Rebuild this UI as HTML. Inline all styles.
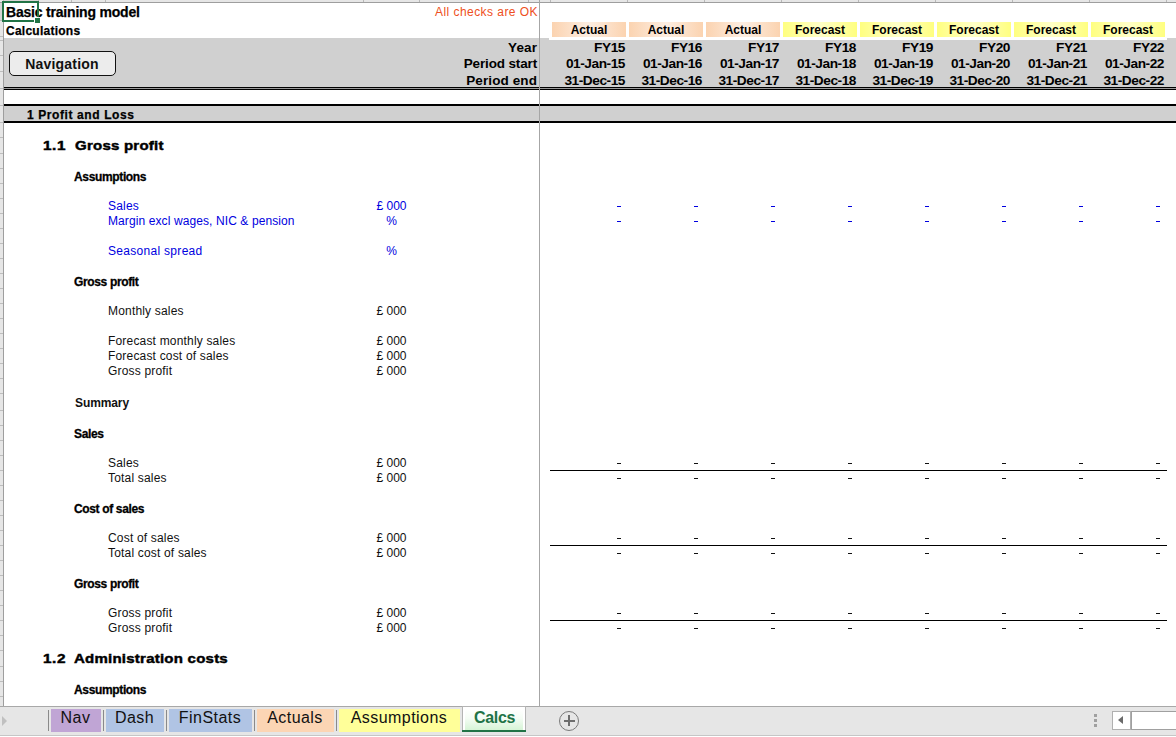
<!DOCTYPE html>
<html><head><meta charset="utf-8"><style>
html,body{margin:0;padding:0;}
body{width:1176px;height:737px;overflow:hidden;position:relative;background:#fff;font-family:"Liberation Sans", sans-serif;}
.t{position:absolute;white-space:nowrap;line-height:20px;font-family:"Liberation Sans", sans-serif;}
.r{position:absolute;}
</style></head><body>
<div class="r" style="left:0px;top:0px;width:3px;height:706px;background:#e6e6e6;"></div>
<div class="r" style="left:0px;top:3px;width:3px;height:17px;background:#d4d4d4;"></div>
<div class="r" style="left:3px;top:0px;width:1px;height:706px;background:#9e9e9e;"></div>
<div class="r" style="left:0px;top:0px;width:1176px;height:2px;background:#e6e6e6;"></div>
<div class="r" style="left:4px;top:0px;width:34px;height:2px;background:#d8d4d4;"></div>
<div class="r" style="left:0px;top:2px;width:1176px;height:1px;background:#9e9e9e;"></div>
<div class="r" style="left:3px;top:0px;width:1px;height:2px;background:#b8b8b8;"></div>
<div class="r" style="left:38px;top:0px;width:1px;height:2px;background:#b8b8b8;"></div>
<div class="r" style="left:71px;top:0px;width:1px;height:2px;background:#b8b8b8;"></div>
<div class="r" style="left:105px;top:0px;width:1px;height:2px;background:#b8b8b8;"></div>
<div class="r" style="left:363px;top:0px;width:1px;height:2px;background:#b8b8b8;"></div>
<div class="r" style="left:419px;top:0px;width:1px;height:2px;background:#b8b8b8;"></div>
<div class="r" style="left:528px;top:0px;width:1px;height:2px;background:#b8b8b8;"></div>
<div class="r" style="left:550px;top:0px;width:1px;height:2px;background:#b8b8b8;"></div>
<div class="r" style="left:627px;top:0px;width:1px;height:2px;background:#b8b8b8;"></div>
<div class="r" style="left:704px;top:0px;width:1px;height:2px;background:#b8b8b8;"></div>
<div class="r" style="left:781px;top:0px;width:1px;height:2px;background:#b8b8b8;"></div>
<div class="r" style="left:858px;top:0px;width:1px;height:2px;background:#b8b8b8;"></div>
<div class="r" style="left:935px;top:0px;width:1px;height:2px;background:#b8b8b8;"></div>
<div class="r" style="left:1012px;top:0px;width:1px;height:2px;background:#b8b8b8;"></div>
<div class="r" style="left:1089px;top:0px;width:1px;height:2px;background:#b8b8b8;"></div>
<div class="r" style="left:1166px;top:0px;width:1px;height:2px;background:#b8b8b8;"></div>
<div class="r" style="left:0px;top:20px;width:3px;height:1px;background:#bdbdbd;"></div>
<div class="r" style="left:0px;top:36px;width:3px;height:1px;background:#bdbdbd;"></div>
<div class="r" style="left:0px;top:40px;width:3px;height:1px;background:#bdbdbd;"></div>
<div class="r" style="left:0px;top:55px;width:3px;height:1px;background:#bdbdbd;"></div>
<div class="r" style="left:0px;top:71px;width:3px;height:1px;background:#bdbdbd;"></div>
<div class="r" style="left:0px;top:88px;width:3px;height:1px;background:#bdbdbd;"></div>
<div class="r" style="left:0px;top:105px;width:3px;height:1px;background:#bdbdbd;"></div>
<div class="r" style="left:0px;top:122px;width:3px;height:1px;background:#bdbdbd;"></div>
<div class="r" style="left:0px;top:137px;width:3px;height:1px;background:#bdbdbd;"></div>
<div class="r" style="left:0px;top:153px;width:3px;height:1px;background:#bdbdbd;"></div>
<div class="r" style="left:0px;top:168px;width:3px;height:1px;background:#bdbdbd;"></div>
<div class="r" style="left:0px;top:183px;width:3px;height:1px;background:#bdbdbd;"></div>
<div class="r" style="left:0px;top:198px;width:3px;height:1px;background:#bdbdbd;"></div>
<div class="r" style="left:0px;top:213px;width:3px;height:1px;background:#bdbdbd;"></div>
<div class="r" style="left:0px;top:228px;width:3px;height:1px;background:#bdbdbd;"></div>
<div class="r" style="left:0px;top:243px;width:3px;height:1px;background:#bdbdbd;"></div>
<div class="r" style="left:0px;top:258px;width:3px;height:1px;background:#bdbdbd;"></div>
<div class="r" style="left:0px;top:273px;width:3px;height:1px;background:#bdbdbd;"></div>
<div class="r" style="left:0px;top:288px;width:3px;height:1px;background:#bdbdbd;"></div>
<div class="r" style="left:0px;top:303px;width:3px;height:1px;background:#bdbdbd;"></div>
<div class="r" style="left:0px;top:318px;width:3px;height:1px;background:#bdbdbd;"></div>
<div class="r" style="left:0px;top:333px;width:3px;height:1px;background:#bdbdbd;"></div>
<div class="r" style="left:0px;top:348px;width:3px;height:1px;background:#bdbdbd;"></div>
<div class="r" style="left:0px;top:363px;width:3px;height:1px;background:#bdbdbd;"></div>
<div class="r" style="left:0px;top:378px;width:3px;height:1px;background:#bdbdbd;"></div>
<div class="r" style="left:0px;top:393px;width:3px;height:1px;background:#bdbdbd;"></div>
<div class="r" style="left:0px;top:410px;width:3px;height:1px;background:#bdbdbd;"></div>
<div class="r" style="left:0px;top:425px;width:3px;height:1px;background:#bdbdbd;"></div>
<div class="r" style="left:0px;top:440px;width:3px;height:1px;background:#bdbdbd;"></div>
<div class="r" style="left:0px;top:455px;width:3px;height:1px;background:#bdbdbd;"></div>
<div class="r" style="left:0px;top:470px;width:3px;height:1px;background:#bdbdbd;"></div>
<div class="r" style="left:0px;top:485px;width:3px;height:1px;background:#bdbdbd;"></div>
<div class="r" style="left:0px;top:500px;width:3px;height:1px;background:#bdbdbd;"></div>
<div class="r" style="left:0px;top:515px;width:3px;height:1px;background:#bdbdbd;"></div>
<div class="r" style="left:0px;top:530px;width:3px;height:1px;background:#bdbdbd;"></div>
<div class="r" style="left:0px;top:545px;width:3px;height:1px;background:#bdbdbd;"></div>
<div class="r" style="left:0px;top:560px;width:3px;height:1px;background:#bdbdbd;"></div>
<div class="r" style="left:0px;top:575px;width:3px;height:1px;background:#bdbdbd;"></div>
<div class="r" style="left:0px;top:590px;width:3px;height:1px;background:#bdbdbd;"></div>
<div class="r" style="left:0px;top:605px;width:3px;height:1px;background:#bdbdbd;"></div>
<div class="r" style="left:0px;top:620px;width:3px;height:1px;background:#bdbdbd;"></div>
<div class="r" style="left:0px;top:635px;width:3px;height:1px;background:#bdbdbd;"></div>
<div class="r" style="left:0px;top:650px;width:3px;height:1px;background:#bdbdbd;"></div>
<div class="r" style="left:0px;top:666px;width:3px;height:1px;background:#bdbdbd;"></div>
<div class="r" style="left:0px;top:681px;width:3px;height:1px;background:#bdbdbd;"></div>
<div class="r" style="left:0px;top:696px;width:3px;height:1px;background:#bdbdbd;"></div>
<div class="r" style="left:4px;top:38px;width:1172px;height:49px;background:#d0d0d0;"></div>
<div class="r" style="left:549px;top:37px;width:618px;height:3px;background:#fff;"></div>
<div class="r" style="left:4px;top:87px;width:1172px;height:1px;background:#000;"></div>
<div class="r" style="left:4px;top:88px;width:1172px;height:1px;background:#9a9a9a;"></div>
<div class="r" style="left:4px;top:89px;width:1172px;height:1px;background:#000;"></div>
<div class="r" style="left:4px;top:104px;width:1172px;height:2px;background:#000;"></div>
<div class="r" style="left:4px;top:106px;width:1172px;height:15px;background:#d0d0d0;"></div>
<div class="r" style="left:4px;top:121px;width:1172px;height:2px;background:#000;"></div>
<div class="r" style="left:552px;top:22px;width:74px;height:15px;background:linear-gradient(90deg,#fbd3b0 0%,#fdeee2 50%,#fbd3b0 100%);"></div>
<div class="t" style="left:439.0px;width:300px;text-align:center;top:20.24px;font-size:12px;font-weight:bold;color:#000;letter-spacing:0px;">Actual</div>
<div class="r" style="left:629px;top:22px;width:74px;height:15px;background:linear-gradient(90deg,#fbd3b0 0%,#fdeee2 50%,#fbd3b0 100%);"></div>
<div class="t" style="left:516.0px;width:300px;text-align:center;top:20.24px;font-size:12px;font-weight:bold;color:#000;letter-spacing:0px;">Actual</div>
<div class="r" style="left:706px;top:22px;width:74px;height:15px;background:linear-gradient(90deg,#fbd3b0 0%,#fdeee2 50%,#fbd3b0 100%);"></div>
<div class="t" style="left:593.0px;width:300px;text-align:center;top:20.24px;font-size:12px;font-weight:bold;color:#000;letter-spacing:0px;">Actual</div>
<div class="r" style="left:783px;top:22px;width:74px;height:15px;background:linear-gradient(90deg,#ffff80 0%,#ffffc8 50%,#ffff80 100%);"></div>
<div class="t" style="left:670.0px;width:300px;text-align:center;top:20.24px;font-size:12px;font-weight:bold;color:#000;letter-spacing:0px;">Forecast</div>
<div class="r" style="left:860px;top:22px;width:74px;height:15px;background:linear-gradient(90deg,#ffff80 0%,#ffffc8 50%,#ffff80 100%);"></div>
<div class="t" style="left:747.0px;width:300px;text-align:center;top:20.24px;font-size:12px;font-weight:bold;color:#000;letter-spacing:0px;">Forecast</div>
<div class="r" style="left:937px;top:22px;width:74px;height:15px;background:linear-gradient(90deg,#ffff80 0%,#ffffc8 50%,#ffff80 100%);"></div>
<div class="t" style="left:824.0px;width:300px;text-align:center;top:20.24px;font-size:12px;font-weight:bold;color:#000;letter-spacing:0px;">Forecast</div>
<div class="r" style="left:1014px;top:22px;width:74px;height:15px;background:linear-gradient(90deg,#ffff80 0%,#ffffc8 50%,#ffff80 100%);"></div>
<div class="t" style="left:901.0px;width:300px;text-align:center;top:20.24px;font-size:12px;font-weight:bold;color:#000;letter-spacing:0px;">Forecast</div>
<div class="r" style="left:1091px;top:22px;width:74px;height:15px;background:linear-gradient(90deg,#ffff80 0%,#ffffc8 50%,#ffff80 100%);"></div>
<div class="t" style="left:978.0px;width:300px;text-align:center;top:20.24px;font-size:12px;font-weight:bold;color:#000;letter-spacing:0px;">Forecast</div>
<div class="t" style="right:639px;top:38.32px;font-size:13.5px;font-weight:bold;color:#000;letter-spacing:0.1px;">Year</div>
<div class="t" style="right:639px;top:54.32px;font-size:13.5px;font-weight:bold;color:#000;letter-spacing:-0.15px;">Period start</div>
<div class="t" style="right:639px;top:71.32px;font-size:13.5px;font-weight:bold;color:#000;letter-spacing:0.1px;">Period end</div>
<div class="t" style="right:551px;top:38.25px;font-size:13.7px;font-weight:bold;color:#000;letter-spacing:-0.45px;">FY15</div>
<div class="t" style="right:551px;top:54.25px;font-size:13.7px;font-weight:bold;color:#000;letter-spacing:-0.45px;">01-Jan-15</div>
<div class="t" style="right:551px;top:71.25px;font-size:13.7px;font-weight:bold;color:#000;letter-spacing:-0.45px;">31-Dec-15</div>
<div class="t" style="right:474px;top:38.25px;font-size:13.7px;font-weight:bold;color:#000;letter-spacing:-0.45px;">FY16</div>
<div class="t" style="right:474px;top:54.25px;font-size:13.7px;font-weight:bold;color:#000;letter-spacing:-0.45px;">01-Jan-16</div>
<div class="t" style="right:474px;top:71.25px;font-size:13.7px;font-weight:bold;color:#000;letter-spacing:-0.45px;">31-Dec-16</div>
<div class="t" style="right:397px;top:38.25px;font-size:13.7px;font-weight:bold;color:#000;letter-spacing:-0.45px;">FY17</div>
<div class="t" style="right:397px;top:54.25px;font-size:13.7px;font-weight:bold;color:#000;letter-spacing:-0.45px;">01-Jan-17</div>
<div class="t" style="right:397px;top:71.25px;font-size:13.7px;font-weight:bold;color:#000;letter-spacing:-0.45px;">31-Dec-17</div>
<div class="t" style="right:320px;top:38.25px;font-size:13.7px;font-weight:bold;color:#000;letter-spacing:-0.45px;">FY18</div>
<div class="t" style="right:320px;top:54.25px;font-size:13.7px;font-weight:bold;color:#000;letter-spacing:-0.45px;">01-Jan-18</div>
<div class="t" style="right:320px;top:71.25px;font-size:13.7px;font-weight:bold;color:#000;letter-spacing:-0.45px;">31-Dec-18</div>
<div class="t" style="right:243px;top:38.25px;font-size:13.7px;font-weight:bold;color:#000;letter-spacing:-0.45px;">FY19</div>
<div class="t" style="right:243px;top:54.25px;font-size:13.7px;font-weight:bold;color:#000;letter-spacing:-0.45px;">01-Jan-19</div>
<div class="t" style="right:243px;top:71.25px;font-size:13.7px;font-weight:bold;color:#000;letter-spacing:-0.45px;">31-Dec-19</div>
<div class="t" style="right:166px;top:38.25px;font-size:13.7px;font-weight:bold;color:#000;letter-spacing:-0.45px;">FY20</div>
<div class="t" style="right:166px;top:54.25px;font-size:13.7px;font-weight:bold;color:#000;letter-spacing:-0.45px;">01-Jan-20</div>
<div class="t" style="right:166px;top:71.25px;font-size:13.7px;font-weight:bold;color:#000;letter-spacing:-0.45px;">31-Dec-20</div>
<div class="t" style="right:89px;top:38.25px;font-size:13.7px;font-weight:bold;color:#000;letter-spacing:-0.45px;">FY21</div>
<div class="t" style="right:89px;top:54.25px;font-size:13.7px;font-weight:bold;color:#000;letter-spacing:-0.45px;">01-Jan-21</div>
<div class="t" style="right:89px;top:71.25px;font-size:13.7px;font-weight:bold;color:#000;letter-spacing:-0.45px;">31-Dec-21</div>
<div class="t" style="right:12px;top:38.25px;font-size:13.7px;font-weight:bold;color:#000;letter-spacing:-0.45px;">FY22</div>
<div class="t" style="right:12px;top:54.25px;font-size:13.7px;font-weight:bold;color:#000;letter-spacing:-0.45px;">01-Jan-22</div>
<div class="t" style="right:12px;top:71.25px;font-size:13.7px;font-weight:bold;color:#000;letter-spacing:-0.45px;">31-Dec-22</div>
<div class="t" style="left:6px;top:2.15px;font-size:14px;font-weight:bold;color:#000;letter-spacing:-0.2px;-webkit-text-stroke:0.25px #000;">Basic training model</div>
<div class="t" style="left:6px;top:20.84px;font-size:12px;font-weight:bold;color:#000;letter-spacing:0.25px;-webkit-text-stroke:0.25px #000;">Calculations</div>
<div class="t" style="right:638px;top:1.84px;font-size:12px;font-weight:normal;color:#ee4f22;letter-spacing:0.45px;">All checks are OK</div>
<div class="r" style="left:9px;top:51px;width:105px;height:23px;background:#ececec;border:1px solid #111;border-radius:5px;"></div>
<div class="t" style="left:-88px;width:300px;text-align:center;top:53.75px;font-size:14px;font-weight:bold;color:#111;letter-spacing:0.2px;">Navigation</div>
<div class="t" style="left:27px;top:104.84px;font-size:12px;font-weight:bold;color:#000;letter-spacing:0.6px;-webkit-text-stroke:0.25px #000;">1 Profit and Loss</div>
<div class="t" style="left:43px;top:135.50px;font-size:13px;font-weight:bold;color:#000;letter-spacing:0.5px;transform:scaleX(1.18);transform-origin:0 0;-webkit-text-stroke:0.45px #000;">1.1</div>
<div class="t" style="left:75px;top:135.50px;font-size:13px;font-weight:bold;color:#000;letter-spacing:0.2px;transform:scaleX(1.155);transform-origin:0 0;-webkit-text-stroke:0.45px #000;">Gross profit</div>
<div class="t" style="left:43px;top:648.50px;font-size:13px;font-weight:bold;color:#000;letter-spacing:0.5px;transform:scaleX(1.18);transform-origin:0 0;-webkit-text-stroke:0.45px #000;">1.2</div>
<div class="t" style="left:74px;top:648.50px;font-size:13px;font-weight:bold;color:#000;letter-spacing:0.2px;transform:scaleX(1.155);transform-origin:0 0;-webkit-text-stroke:0.45px #000;">Administration costs</div>
<div class="t" style="left:74px;top:166.84px;font-size:12px;font-weight:bold;color:#000;letter-spacing:-0.35px;-webkit-text-stroke:0.3px #000;">Assumptions</div>
<div class="t" style="left:74px;top:271.84px;font-size:12px;font-weight:bold;color:#000;letter-spacing:-0.35px;-webkit-text-stroke:0.3px #000;">Gross profit</div>
<div class="t" style="left:74px;top:423.84px;font-size:12px;font-weight:bold;color:#000;letter-spacing:-0.35px;-webkit-text-stroke:0.3px #000;">Sales</div>
<div class="t" style="left:74px;top:498.84px;font-size:12px;font-weight:bold;color:#000;letter-spacing:-0.35px;-webkit-text-stroke:0.3px #000;">Cost of sales</div>
<div class="t" style="left:74px;top:573.84px;font-size:12px;font-weight:bold;color:#000;letter-spacing:-0.35px;-webkit-text-stroke:0.3px #000;">Gross profit</div>
<div class="t" style="left:74px;top:679.84px;font-size:12px;font-weight:bold;color:#000;letter-spacing:-0.35px;-webkit-text-stroke:0.3px #000;">Assumptions</div>
<div class="t" style="left:75px;top:392.84px;font-size:12px;font-weight:bold;color:#111;letter-spacing:-0.1px;">Summary</div>
<div class="t" style="left:108px;top:195.84px;font-size:12px;font-weight:normal;color:#0000e0;letter-spacing:0.18px;">Sales</div>
<div class="t" style="left:241.5px;width:300px;text-align:center;top:195.84px;font-size:12px;font-weight:normal;color:#0000e0;letter-spacing:0px;">£ 000</div>
<div class="r" style="left:617px;top:206px;width:4px;height:1px;background:#0000e0;"></div>
<div class="r" style="left:694px;top:206px;width:4px;height:1px;background:#0000e0;"></div>
<div class="r" style="left:771px;top:206px;width:4px;height:1px;background:#0000e0;"></div>
<div class="r" style="left:848px;top:206px;width:4px;height:1px;background:#0000e0;"></div>
<div class="r" style="left:925px;top:206px;width:4px;height:1px;background:#0000e0;"></div>
<div class="r" style="left:1002px;top:206px;width:4px;height:1px;background:#0000e0;"></div>
<div class="r" style="left:1079px;top:206px;width:4px;height:1px;background:#0000e0;"></div>
<div class="r" style="left:1156px;top:206px;width:4px;height:1px;background:#0000e0;"></div>
<div class="t" style="left:108px;top:210.84px;font-size:12px;font-weight:normal;color:#0000e0;letter-spacing:0.1px;">Margin excl wages, NIC &amp; pension</div>
<div class="t" style="left:241.5px;width:300px;text-align:center;top:210.84px;font-size:12px;font-weight:normal;color:#0000e0;letter-spacing:0px;">%</div>
<div class="r" style="left:617px;top:221px;width:4px;height:1px;background:#0000e0;"></div>
<div class="r" style="left:694px;top:221px;width:4px;height:1px;background:#0000e0;"></div>
<div class="r" style="left:771px;top:221px;width:4px;height:1px;background:#0000e0;"></div>
<div class="r" style="left:848px;top:221px;width:4px;height:1px;background:#0000e0;"></div>
<div class="r" style="left:925px;top:221px;width:4px;height:1px;background:#0000e0;"></div>
<div class="r" style="left:1002px;top:221px;width:4px;height:1px;background:#0000e0;"></div>
<div class="r" style="left:1079px;top:221px;width:4px;height:1px;background:#0000e0;"></div>
<div class="r" style="left:1156px;top:221px;width:4px;height:1px;background:#0000e0;"></div>
<div class="t" style="left:108px;top:240.84px;font-size:12px;font-weight:normal;color:#0000e0;letter-spacing:0.3px;">Seasonal spread</div>
<div class="t" style="left:241.5px;width:300px;text-align:center;top:240.84px;font-size:12px;font-weight:normal;color:#0000e0;letter-spacing:0px;">%</div>
<div class="t" style="left:108px;top:300.84px;font-size:12px;font-weight:normal;color:#111;letter-spacing:0.18px;">Monthly sales</div>
<div class="t" style="left:241.5px;width:300px;text-align:center;top:300.84px;font-size:12px;font-weight:normal;color:#111;letter-spacing:0px;">£ 000</div>
<div class="t" style="left:108px;top:330.84px;font-size:12px;font-weight:normal;color:#111;letter-spacing:0.18px;">Forecast monthly sales</div>
<div class="t" style="left:241.5px;width:300px;text-align:center;top:330.84px;font-size:12px;font-weight:normal;color:#111;letter-spacing:0px;">£ 000</div>
<div class="t" style="left:108px;top:345.84px;font-size:12px;font-weight:normal;color:#111;letter-spacing:0.18px;">Forecast cost of sales</div>
<div class="t" style="left:241.5px;width:300px;text-align:center;top:345.84px;font-size:12px;font-weight:normal;color:#111;letter-spacing:0px;">£ 000</div>
<div class="t" style="left:108px;top:360.84px;font-size:12px;font-weight:normal;color:#111;letter-spacing:0.18px;">Gross profit</div>
<div class="t" style="left:241.5px;width:300px;text-align:center;top:360.84px;font-size:12px;font-weight:normal;color:#111;letter-spacing:0px;">£ 000</div>
<div class="t" style="left:108px;top:452.84px;font-size:12px;font-weight:normal;color:#111;letter-spacing:0.18px;">Sales</div>
<div class="t" style="left:241.5px;width:300px;text-align:center;top:452.84px;font-size:12px;font-weight:normal;color:#111;letter-spacing:0px;">£ 000</div>
<div class="r" style="left:617px;top:463px;width:4px;height:1px;background:#111;"></div>
<div class="r" style="left:694px;top:463px;width:4px;height:1px;background:#111;"></div>
<div class="r" style="left:771px;top:463px;width:4px;height:1px;background:#111;"></div>
<div class="r" style="left:848px;top:463px;width:4px;height:1px;background:#111;"></div>
<div class="r" style="left:925px;top:463px;width:4px;height:1px;background:#111;"></div>
<div class="r" style="left:1002px;top:463px;width:4px;height:1px;background:#111;"></div>
<div class="r" style="left:1079px;top:463px;width:4px;height:1px;background:#111;"></div>
<div class="r" style="left:1156px;top:463px;width:4px;height:1px;background:#111;"></div>
<div class="t" style="left:108px;top:467.84px;font-size:12px;font-weight:normal;color:#111;letter-spacing:0.18px;">Total sales</div>
<div class="t" style="left:241.5px;width:300px;text-align:center;top:467.84px;font-size:12px;font-weight:normal;color:#111;letter-spacing:0px;">£ 000</div>
<div class="r" style="left:617px;top:478px;width:4px;height:1px;background:#111;"></div>
<div class="r" style="left:694px;top:478px;width:4px;height:1px;background:#111;"></div>
<div class="r" style="left:771px;top:478px;width:4px;height:1px;background:#111;"></div>
<div class="r" style="left:848px;top:478px;width:4px;height:1px;background:#111;"></div>
<div class="r" style="left:925px;top:478px;width:4px;height:1px;background:#111;"></div>
<div class="r" style="left:1002px;top:478px;width:4px;height:1px;background:#111;"></div>
<div class="r" style="left:1079px;top:478px;width:4px;height:1px;background:#111;"></div>
<div class="r" style="left:1156px;top:478px;width:4px;height:1px;background:#111;"></div>
<div class="t" style="left:108px;top:527.84px;font-size:12px;font-weight:normal;color:#111;letter-spacing:0.18px;">Cost of sales</div>
<div class="t" style="left:241.5px;width:300px;text-align:center;top:527.84px;font-size:12px;font-weight:normal;color:#111;letter-spacing:0px;">£ 000</div>
<div class="r" style="left:617px;top:538px;width:4px;height:1px;background:#111;"></div>
<div class="r" style="left:694px;top:538px;width:4px;height:1px;background:#111;"></div>
<div class="r" style="left:771px;top:538px;width:4px;height:1px;background:#111;"></div>
<div class="r" style="left:848px;top:538px;width:4px;height:1px;background:#111;"></div>
<div class="r" style="left:925px;top:538px;width:4px;height:1px;background:#111;"></div>
<div class="r" style="left:1002px;top:538px;width:4px;height:1px;background:#111;"></div>
<div class="r" style="left:1079px;top:538px;width:4px;height:1px;background:#111;"></div>
<div class="r" style="left:1156px;top:538px;width:4px;height:1px;background:#111;"></div>
<div class="t" style="left:108px;top:542.84px;font-size:12px;font-weight:normal;color:#111;letter-spacing:0.18px;">Total cost of sales</div>
<div class="t" style="left:241.5px;width:300px;text-align:center;top:542.84px;font-size:12px;font-weight:normal;color:#111;letter-spacing:0px;">£ 000</div>
<div class="r" style="left:617px;top:553px;width:4px;height:1px;background:#111;"></div>
<div class="r" style="left:694px;top:553px;width:4px;height:1px;background:#111;"></div>
<div class="r" style="left:771px;top:553px;width:4px;height:1px;background:#111;"></div>
<div class="r" style="left:848px;top:553px;width:4px;height:1px;background:#111;"></div>
<div class="r" style="left:925px;top:553px;width:4px;height:1px;background:#111;"></div>
<div class="r" style="left:1002px;top:553px;width:4px;height:1px;background:#111;"></div>
<div class="r" style="left:1079px;top:553px;width:4px;height:1px;background:#111;"></div>
<div class="r" style="left:1156px;top:553px;width:4px;height:1px;background:#111;"></div>
<div class="t" style="left:108px;top:602.84px;font-size:12px;font-weight:normal;color:#111;letter-spacing:0.18px;">Gross profit</div>
<div class="t" style="left:241.5px;width:300px;text-align:center;top:602.84px;font-size:12px;font-weight:normal;color:#111;letter-spacing:0px;">£ 000</div>
<div class="r" style="left:617px;top:613px;width:4px;height:1px;background:#111;"></div>
<div class="r" style="left:694px;top:613px;width:4px;height:1px;background:#111;"></div>
<div class="r" style="left:771px;top:613px;width:4px;height:1px;background:#111;"></div>
<div class="r" style="left:848px;top:613px;width:4px;height:1px;background:#111;"></div>
<div class="r" style="left:925px;top:613px;width:4px;height:1px;background:#111;"></div>
<div class="r" style="left:1002px;top:613px;width:4px;height:1px;background:#111;"></div>
<div class="r" style="left:1079px;top:613px;width:4px;height:1px;background:#111;"></div>
<div class="r" style="left:1156px;top:613px;width:4px;height:1px;background:#111;"></div>
<div class="t" style="left:108px;top:617.84px;font-size:12px;font-weight:normal;color:#111;letter-spacing:0.18px;">Gross profit</div>
<div class="t" style="left:241.5px;width:300px;text-align:center;top:617.84px;font-size:12px;font-weight:normal;color:#111;letter-spacing:0px;">£ 000</div>
<div class="r" style="left:617px;top:628px;width:4px;height:1px;background:#111;"></div>
<div class="r" style="left:694px;top:628px;width:4px;height:1px;background:#111;"></div>
<div class="r" style="left:771px;top:628px;width:4px;height:1px;background:#111;"></div>
<div class="r" style="left:848px;top:628px;width:4px;height:1px;background:#111;"></div>
<div class="r" style="left:925px;top:628px;width:4px;height:1px;background:#111;"></div>
<div class="r" style="left:1002px;top:628px;width:4px;height:1px;background:#111;"></div>
<div class="r" style="left:1079px;top:628px;width:4px;height:1px;background:#111;"></div>
<div class="r" style="left:1156px;top:628px;width:4px;height:1px;background:#111;"></div>
<div class="r" style="left:550px;top:470px;width:617px;height:1px;background:#000;"></div>
<div class="r" style="left:550px;top:545px;width:617px;height:1px;background:#000;"></div>
<div class="r" style="left:550px;top:620px;width:617px;height:1px;background:#000;"></div>
<div class="r" style="left:539px;top:0px;width:1px;height:706px;background:#a6a6a6;"></div>
<div class="r" style="left:2px;top:1px;width:33px;height:17px;border:2px solid #217346;border-right-color:transparent;border-bottom-color:transparent"></div>
<div class="r" style="left:37px;top:1px;width:2px;height:16px;background:#217346;"></div>
<div class="r" style="left:2px;top:20px;width:32px;height:2px;background:#217346;"></div>
<div class="r" style="left:35px;top:18px;width:5px;height:5px;background:#217346;"></div>
<div class="r" style="left:0;top:706px;width:1176px;height:31px;background:#e6e6e6;border-top:1px solid #a8a8a8;box-sizing:border-box"></div>
<div class="r" style="left:0px;top:735px;width:1176px;height:1px;background:#c6c6c6;"></div>
<div class="r" style="left:0px;top:736px;width:1176px;height:1px;background:#ffffff;"></div>
<div class="r" style="left:2px;top:716px;width:0;height:0;border-top:5px solid transparent;border-bottom:5px solid transparent;border-left:5px solid #c0c0c0"></div>
<div class="r" style="left:51px;top:709px;width:50px;height:23px;background:#c0a5d5;"></div>
<div class="t" style="left:-74.5px;width:300px;text-align:center;top:708.46px;font-size:16px;font-weight:normal;color:#111;letter-spacing:0.45px;">Nav</div>
<div class="r" style="left:106px;top:709px;width:58px;height:23px;background:#b0c4e4;"></div>
<div class="t" style="left:-15.5px;width:300px;text-align:center;top:708.46px;font-size:16px;font-weight:normal;color:#111;letter-spacing:0.45px;">Dash</div>
<div class="r" style="left:169px;top:709px;width:83px;height:23px;background:#b0c4e4;"></div>
<div class="t" style="left:60.0px;width:300px;text-align:center;top:708.46px;font-size:16px;font-weight:normal;color:#111;letter-spacing:0.45px;">FinStats</div>
<div class="r" style="left:257px;top:709px;width:77px;height:23px;background:#fcd5b4;"></div>
<div class="t" style="left:145.0px;width:300px;text-align:center;top:708.46px;font-size:16px;font-weight:normal;color:#111;letter-spacing:0.45px;">Actuals</div>
<div class="r" style="left:339px;top:709px;width:121px;height:23px;background:#ffff99;"></div>
<div class="t" style="left:249.0px;width:300px;text-align:center;top:708.46px;font-size:16px;font-weight:normal;color:#111;letter-spacing:0.45px;">Assumptions</div>
<div class="r" style="left:48px;top:710px;width:1px;height:21px;background:#8a8a8a;"></div>
<div class="r" style="left:103px;top:710px;width:1px;height:21px;background:#8a8a8a;"></div>
<div class="r" style="left:166px;top:710px;width:1px;height:21px;background:#8a8a8a;"></div>
<div class="r" style="left:254px;top:710px;width:1px;height:21px;background:#8a8a8a;"></div>
<div class="r" style="left:336px;top:710px;width:1px;height:21px;background:#8a8a8a;"></div>
<div class="r" style="left:462px;top:706px;width:64px;height:25px;background:#fff;border:1px solid #b4b4b4;border-bottom:none;box-sizing:border-box"></div>
<div class="r" style="left:465px;top:709px;width:58px;height:21px;background:linear-gradient(180deg,#ffffff 0%,#f4fcf4 45%,#d6f4d6 100%);"></div>
<div class="r" style="left:462px;top:730px;width:64px;height:2px;background:#217346;"></div>
<div class="t" style="left:344.5px;width:300px;text-align:center;top:707.96px;font-size:16px;font-weight:bold;color:#217346;letter-spacing:-0.3px;">Calcs</div>
<div class="r" style="left:559px;top:711px;width:20px;height:20px;border:1.5px solid #7a7a7a;border-radius:50%;box-sizing:border-box"></div>
<div class="r" style="left:563.5px;top:720px;width:11px;height:1.6px;background:#6e6e6e;"></div>
<div class="r" style="left:568.2px;top:715.3px;width:1.6px;height:11px;background:#6e6e6e;"></div>
<div class="r" style="left:1094px;top:714px;width:3px;height:3px;background:#a0a0a0;"></div>
<div class="r" style="left:1094px;top:719px;width:3px;height:3px;background:#a0a0a0;"></div>
<div class="r" style="left:1094px;top:724px;width:3px;height:3px;background:#a0a0a0;"></div>
<div class="r" style="left:1112px;top:711px;width:19px;height:19px;background:#fff;border:1px solid #b0b0b0;box-sizing:border-box"></div>
<div class="r" style="left:1118px;top:716px;width:0;height:0;border-top:4.5px solid transparent;border-bottom:4.5px solid transparent;border-right:5.5px solid #6a6a6a"></div>
<div class="r" style="left:1131px;top:711px;width:50px;height:19px;background:#fff;border:1px solid #a0a0a0;box-sizing:border-box"></div>
</body></html>
